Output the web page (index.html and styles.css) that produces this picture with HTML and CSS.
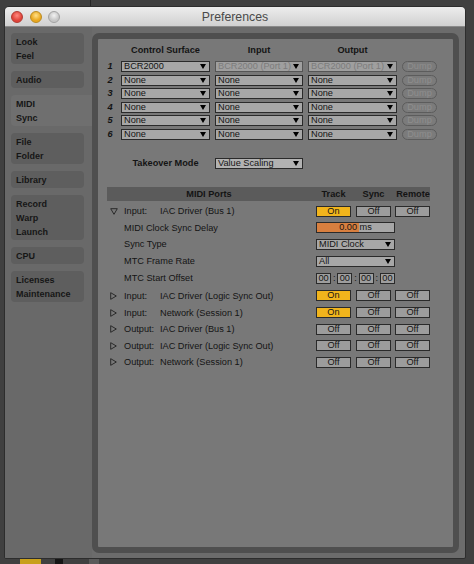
FILE: index.html
```html
<!DOCTYPE html>
<html lang="en">
<head>
    <meta charset="UTF-8">
    <meta name="viewport" content="width=device-width, initial-scale=1.0">
    <title>Preferences</title>
    <link rel="stylesheet" href="styles.css">
</head>
<body>
    <div class="top-strip"></div>

    <div class="window">
        <!-- title bar -->
        <div class="titlebar">
            <div class="lights">
                <span class="light red"></span>
                <span class="light yellow"></span>
                <span class="light grey"></span>
            </div>
            <div class="title">Preferences</div>
            <div></div>
        </div>

        <div class="body">
            <!-- tabs -->
            <nav class="sidebar">
                <div class="tab">Look<br>Feel</div>
                <div class="tab">Audio</div>
                <div class="tab active">MIDI<br>Sync</div>
                <div class="tab">File<br>Folder</div>
                <div class="tab">Library</div>
                <div class="tab">Record<br>Warp<br>Launch</div>
                <div class="tab">CPU</div>
                <div class="tab">Licenses<br>Maintenance</div>
            </nav>

            <!-- MIDI / Sync page -->
            <main class="frame">
                <div class="surfaces">
                    <div class="head"></div>
                    <div class="head">Control Surface</div>
                    <div class="head">Input</div>
                    <div class="head">Output</div>
                    <div class="head"></div>

                    <div class="num">1</div>
                    <div class="select">BCR2000</div>
                    <div class="select disabled">BCR2000 (Port 1)</div>
                    <div class="select disabled">BCR2000 (Port 1)</div>
                    <div class="dump">Dump</div>

                    <div class="num">2</div>
                    <div class="select">None</div>
                    <div class="select">None</div>
                    <div class="select">None</div>
                    <div class="dump">Dump</div>

                    <div class="num">3</div>
                    <div class="select">None</div>
                    <div class="select">None</div>
                    <div class="select">None</div>
                    <div class="dump">Dump</div>

                    <div class="num">4</div>
                    <div class="select">None</div>
                    <div class="select">None</div>
                    <div class="select">None</div>
                    <div class="dump">Dump</div>

                    <div class="num">5</div>
                    <div class="select">None</div>
                    <div class="select">None</div>
                    <div class="select">None</div>
                    <div class="dump">Dump</div>

                    <div class="num">6</div>
                    <div class="select">None</div>
                    <div class="select">None</div>
                    <div class="select">None</div>
                    <div class="dump">Dump</div>
                </div>

                <div class="takeover">
                    <div></div>
                    <div class="label">Takeover Mode</div>
                    <div class="select pale">Value Scaling</div>
                </div>

                <div class="ports">
                    <div class="port-grid ports-head">
                        <div class="ports-title">MIDI Ports</div>
                        <div class="col-head">Track</div>
                        <div class="col-head">Sync</div>
                        <div class="col-head">Remote</div>
                    </div>

                    <div class="ports-body">
                        <div class="port-grid row">
                            <div class="tri"><svg width="8" height="7" viewBox="0 0 8 7"><polygon points="0.7,0.7 7.3,0.7 4,6.3" fill="none" stroke="#2a2a2a" stroke-width="1"/></svg></div>
                            <div>Input:</div>
                            <div>IAC Driver (Bus 1)</div>
                            <div class="btn on">On</div>
                            <div class="btn">Off</div>
                            <div class="btn">Off</div>
                        </div>
                        <div class="port-grid row">
                            <div></div>
                            <div class="wide">MIDI Clock Sync Delay</div>
                            <div class="control slider">0.00 ms</div>
                        </div>
                        <div class="port-grid row">
                            <div></div>
                            <div class="wide">Sync Type</div>
                            <div class="control select">MIDI Clock</div>
                        </div>
                        <div class="port-grid row">
                            <div></div>
                            <div class="wide">MTC Frame Rate</div>
                            <div class="control select">All</div>
                        </div>
                        <div class="port-grid row tall">
                            <div></div>
                            <div class="wide">MTC Start Offset</div>
                            <div class="control offset">
                                <span class="box">00</span>:<span class="box">00</span>:<span class="box">00</span>:<span class="box">00</span>
                            </div>
                        </div>
                        <div class="port-grid row">
                            <div class="tri"><svg width="7" height="8" viewBox="0 0 7 8"><polygon points="0.7,0.7 6.3,4 0.7,7.3" fill="none" stroke="#2a2a2a" stroke-width="1"/></svg></div>
                            <div>Input:</div>
                            <div>IAC Driver (Logic Sync Out)</div>
                            <div class="btn on">On</div>
                            <div class="btn">Off</div>
                            <div class="btn">Off</div>
                        </div>
                        <div class="port-grid row">
                            <div class="tri"><svg width="7" height="8" viewBox="0 0 7 8"><polygon points="0.7,0.7 6.3,4 0.7,7.3" fill="none" stroke="#2a2a2a" stroke-width="1"/></svg></div>
                            <div>Input:</div>
                            <div>Network (Session 1)</div>
                            <div class="btn on">On</div>
                            <div class="btn">Off</div>
                            <div class="btn">Off</div>
                        </div>
                        <div class="port-grid row">
                            <div class="tri"><svg width="7" height="8" viewBox="0 0 7 8"><polygon points="0.7,0.7 6.3,4 0.7,7.3" fill="none" stroke="#2a2a2a" stroke-width="1"/></svg></div>
                            <div>Output:</div>
                            <div>IAC Driver (Bus 1)</div>
                            <div class="btn">Off</div>
                            <div class="btn">Off</div>
                            <div class="btn">Off</div>
                        </div>
                        <div class="port-grid row">
                            <div class="tri"><svg width="7" height="8" viewBox="0 0 7 8"><polygon points="0.7,0.7 6.3,4 0.7,7.3" fill="none" stroke="#2a2a2a" stroke-width="1"/></svg></div>
                            <div>Output:</div>
                            <div>IAC Driver (Logic Sync Out)</div>
                            <div class="btn">Off</div>
                            <div class="btn">Off</div>
                            <div class="btn">Off</div>
                        </div>
                        <div class="port-grid row">
                            <div class="tri"><svg width="7" height="8" viewBox="0 0 7 8"><polygon points="0.7,0.7 6.3,4 0.7,7.3" fill="none" stroke="#2a2a2a" stroke-width="1"/></svg></div>
                            <div>Output:</div>
                            <div>Network (Session 1)</div>
                            <div class="btn">Off</div>
                            <div class="btn">Off</div>
                            <div class="btn">Off</div>
                        </div>
                    </div>
                </div>
            </main>
        </div>
    </div>

    <!-- bits of the app behind the window -->
    <div class="dock">
        <span class="dock-yellow"></span>
        <span class="dock-dark"></span>
        <span class="dock-mark"></span>
    </div>
</body>
</html>
```

FILE: styles.css
```css
* {
    box-sizing: border-box;
}
body {
    margin: 0;
    width: 474px;
    height: 564px;
    overflow: hidden;
    background: #404040;
    font-family: "Liberation Sans", Arial, sans-serif;
    font-size: 9.2px;
    color: #141414;
}
.top-strip {
    height: 6px;
    margin-left: 90px;
    border-left: 1px solid #262626;
}

/* window */
.window {
    margin-left: 4px;
    width: 462px;
    height: 553px;
    border: 1px solid #2d2d2d;
    border-radius: 5px 5px 2px 2px;
    background: #6c6c6c;
    display: flex;
    flex-direction: column;
    overflow: hidden;
}
.titlebar {
    flex: none;
    height: 20px;
    display: grid;
    grid-template-columns: 1fr auto 1fr;
    align-items: center;
    background: linear-gradient(#ededed, #d0d0d0);
    border-bottom: 1px solid #8a8a8a;
}
.lights {
    display: flex;
    gap: 6.5px;
    padding-left: 6px;
}
.light {
    width: 12px;
    height: 12px;
    border-radius: 50%;
}
.red {
    background: radial-gradient(circle at 50% 35%, #ff8a80, #e0443a 60%);
    border: 1px solid #b03a32;
}
.yellow {
    background: radial-gradient(circle at 50% 35%, #ffe08a, #eaa820 60%);
    border: 1px solid #b98a22;
}
.grey {
    background: radial-gradient(circle at 50% 35%, #f2f2f2, #c6c6c6 60%);
    border: 1px solid #a2a2a2;
}
.title {
    font-size: 12.3px;
    color: #4a4a4a;
}

.body {
    flex: 1;
    display: flex;
}

/* sidebar */
.sidebar {
    flex: none;
    width: 87px;
    padding: 6px 0 0 6px;
    display: flex;
    flex-direction: column;
    gap: 7px;
    background: #696969;
}
.tab {
    width: 73px;
    padding: 1.5px 0 1.5px 5px;
    line-height: 14px;
    font-size: 9px;
    font-weight: bold;
    color: #161616;
    background: #5e5e5e;
    border-radius: 4px;
}
.tab.active {
    width: 81px;
    background: #6f6f6f;
    border-radius: 4px 0 0 4px;
}

/* main frame */
.frame {
    flex: 1;
    margin: 6px 6px 5px 0;
    border: 6px solid #4f4f4f;
    border-radius: 7px;
    background: #787878;
    padding: 5px 0 0 6px;
}

.surfaces,
.takeover {
    display: grid;
    grid-template-columns: 12px 89px 88px 89px 35px;
    column-gap: 5px;
    row-gap: 2.6px;
    align-items: center;
}
.head {
    height: 14.4px;
    line-height: 12px;
    text-align: center;
    font-weight: bold;
}
.num {
    text-align: center;
    font-weight: bold;
    font-style: italic;
    line-height: 11px;
}
.select {
    height: 11px;
    display: flex;
    align-items: center;
    justify-content: space-between;
    padding: 0 3px 0 2px;
    border: 1px solid #2a2a2a;
    background: #a7a7a7;
    line-height: 9px;
    white-space: nowrap;
    overflow: hidden;
}
.select::after {
    content: "";
    flex: none;
    border-left: 3px solid transparent;
    border-right: 3px solid transparent;
    border-top: 5px solid #000;
}
.select.disabled {
    color: #7c7c7c;
    background: #9f9f9f;
    border-color: #555;
}
.select.pale {
    background: #b2b2b2;
}
.dump {
    height: 11px;
    line-height: 9px;
    text-align: center;
    color: #8e8e8e;
    background: #7b7b7b;
    border: 1px solid #5c5c5c;
    border-radius: 6px;
}

.takeover {
    margin-top: 18px;
}
.takeover .label {
    text-align: center;
    font-weight: bold;
}

/* MIDI ports */
.ports {
    margin: 18px 0 0 3px;
    width: 323px;
}
.port-grid {
    display: grid;
    grid-template-columns: 17px 36px 151px 40px 40px 39px;
    align-items: center;
}
.ports-head {
    height: 14px;
    line-height: 14px;
    background: #5b5b5b;
    font-weight: bold;
}
.ports-title {
    grid-column: 1 / 4;
    text-align: center;
}
.col-head {
    text-align: center;
    padding-left: 5px;
}
.ports-body {
    padding-top: 2px;
}
.row {
    height: 16.6px;
    white-space: nowrap;
}
.row.tall {
    height: 18.3px;
}
.tri {
    display: flex;
    padding-left: 3px;
}
.wide {
    grid-column: 2 / 4;
}
.btn {
    justify-self: end;
    width: 35px;
    height: 11px;
    line-height: 9px;
    text-align: center;
    border: 1px solid #2a2a2a;
    background: #9c9c9c;
}
.btn.on {
    background: #f1b41c;
}
.control {
    grid-column: 4 / 7;
    justify-self: start;
    margin-left: 5px;
    width: 79px;
}
.slider {
    height: 11px;
    line-height: 9px;
    text-align: center;
    border: 1px solid #2a2a2a;
    background: linear-gradient(to right, #d87f3f 54%, #a7a7a7 54%);
}
.offset {
    display: flex;
    justify-content: space-between;
    align-items: center;
    height: 11px;
}
.box {
    width: 15px;
    height: 11px;
    line-height: 9px;
    text-align: center;
    border: 1px solid #2a2a2a;
    background: #9e9e9e;
}

/* app behind the window */
.dock {
    display: flex;
    gap: 14px;
    height: 5px;
    padding-left: 20px;
}
.dock-yellow {
    width: 21px;
    background: #c8a01c;
}
.dock-dark {
    width: 8px;
    background: #151515;
}
.dock-mark {
    width: 10px;
    margin-left: 12px;
    background: #5a5a5a;
}
```
